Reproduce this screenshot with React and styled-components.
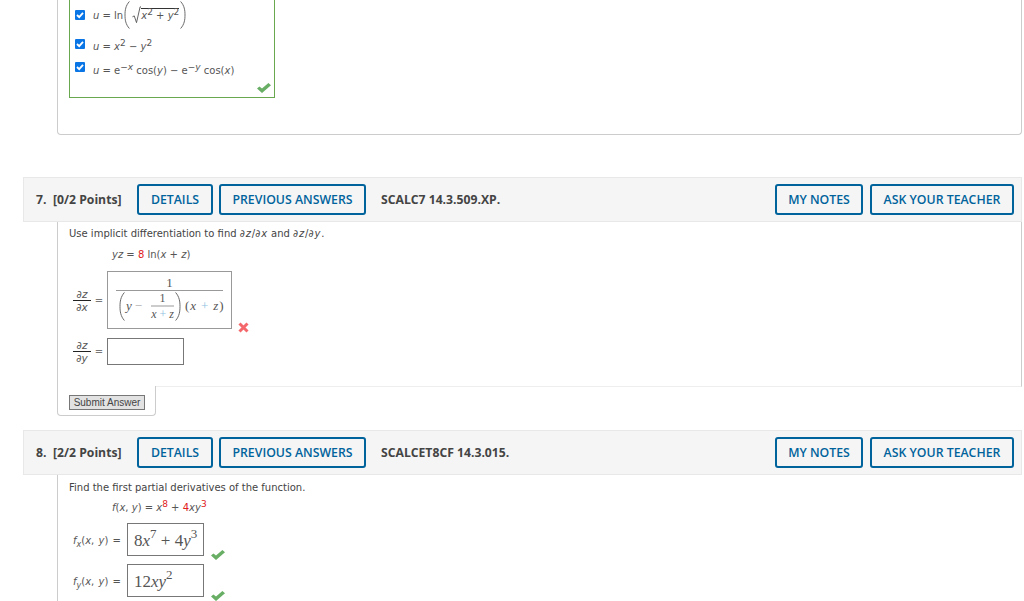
import React from 'react'
import styled, { createGlobalStyle } from 'styled-components'

const GlobalStyle = createGlobalStyle`
  html, body {
    margin: 0;
    height: 100%;
    overflow: hidden;
    background: #fff;
  }
`

const sans = `"DejaVu Sans", Verdana, sans-serif`
const uiSans = `"Liberation Sans", Arial, sans-serif`
const serif = `"Liberation Serif", "Times New Roman", serif`
const heading = `"Open Sans", "Noto Sans", sans-serif`

function Paren({ flip, height = 30 }) {
  return (
    <ParenSvg viewBox="0 0 6 30" width="6" height={height} $flip={flip} preserveAspectRatio="none">
      <path d="M5.4 0.5 C1.6 5 1 10 1 15 C1 20 1.6 25 5.4 29.5" fill="none" stroke="#666" strokeWidth="1" />
    </ParenSvg>
  )
}

function CheckMark() {
  return (
    <svg viewBox="0 0 14 10" width="14" height="10">
      <path d="M0 5.6 L2.4 3.4 L5 5.6 L11.4 0 L14 2.2 L5 10 Z" fill="#68ae64" />
    </svg>
  )
}

function CrossIcon() {
  return (
    <svg viewBox="0 0 11 11" width="11" height="11">
      <path d="M1.5 1.5 L9.5 9.5 M9.5 1.5 L1.5 9.5" fill="none" stroke="#f4686c" strokeWidth="3" />
    </svg>
  )
}

function Tick() {
  return (
    <TickBox>
      <svg viewBox="0 0 10 10" width="10" height="10">
        <path d="M2 5 L4.2 7.2 L8 2.8" fill="none" stroke="#fff" strokeWidth="1.8" />
      </svg>
    </TickBox>
  )
}

function QuestionHeader({ number, points, code }) {
  return (
    <Header>
      <Number>{number}.</Number>
      <Points>[{points} Points]</Points>
      <HeaderButton $width={76}>DETAILS</HeaderButton>
      <HeaderButton $width={147}>PREVIOUS ANSWERS</HeaderButton>
      <BookCode>{code}</BookCode>
      <HeaderRight>
        <HeaderButton $width={88}>MY NOTES</HeaderButton>
        <HeaderButton $width={144}>ASK YOUR TEACHER</HeaderButton>
      </HeaderRight>
    </Header>
  )
}

function Partial({ of }) {
  return (
    <Fraction>
      <Numer><i>∂z</i></Numer>
      <Denom><i>∂{of}</i></Denom>
    </Fraction>
  )
}

export default function App() {
  return (
    <Page>
      <GlobalStyle />
      <PrevCard>
        <GreenBox>
          <CheckRow $height={28}>
            <Tick />
            <RootLine>
              <i>u</i> = ln
              <Paren height={28} />
              <Radical viewBox="0 0 10 20" width="9" height="20">
                <path d="M0.5 12 L2.5 11 L5 18.5 L9 1 L10 1" fill="none" stroke="#555" strokeWidth="1" />
              </Radical>
              <Radicand><i>x</i><sup>2</sup> + <i>y</i><sup>2</sup></Radicand>
              <Paren flip height={28} />
            </RootLine>
          </CheckRow>
          <CheckRow $height={23} $top={1}>
            <Tick />
            <MathLine $shift={3}><i>u</i> = <i>x</i><sup>2</sup> − <i>y</i><sup>2</sup></MathLine>
          </CheckRow>
          <CheckRow $height={24} $top={1}>
            <Tick />
            <MathLine $shift={4}>
              <i>u</i> = e<sup>−<i>x</i></sup> cos(<i>y</i>) − e<sup>−<i>y</i></sup> cos(<i>x</i>)
            </MathLine>
          </CheckRow>
          <BoxMark><CheckMark /></BoxMark>
        </GreenBox>
      </PrevCard>

      <QuestionHeader number={7} points="0/2" code="SCALC7 14.3.509.XP." />
      <BodyMain>
        <Prompt>Use implicit differentiation to find <i>∂z</i>/<i>∂x</i> and <i>∂z</i>/<i>∂y</i>.</Prompt>
        <Formula $indent={43} $top={7}>
          <i>yz</i> = <Red>8</Red> ln(<i>x</i> + <i>z</i>)
        </Formula>
        <AnswerRow $top={9}>
          <Partial of="x" />
          <Equals>=</Equals>
          <AnswerBox $width={125} $height={58} $light>
            <SerifFraction>
              <span>1</span>
              <SerifDenom>
                <Paren height={29} />
                <i>y</i><Faint>−</Faint>
                <InnerFraction>
                  <span>1</span>
                  <span><i>x</i> <Plus>+</Plus> <i>z</i></span>
                </InnerFraction>
                <Paren flip height={29} />
                <Spaced>(<i>x</i> <Plus>+</Plus> <i>z</i>)</Spaced>
              </SerifDenom>
            </SerifFraction>
          </AnswerBox>
          <CrossMark><CrossIcon /></CrossMark>
        </AnswerRow>
        <AnswerRow $top={9}>
          <Partial of="y" />
          <Equals>=</Equals>
          <AnswerBox $width={77} $height={27} />
        </AnswerRow>
      </BodyMain>
      <SubmitTab>
        <SubmitButton>Submit Answer</SubmitButton>
      </SubmitTab>

      <QuestionHeader number={8} points="2/2" code="SCALCET8CF 14.3.015." />
      <LastBody>
        <Prompt $top={6}>Find the first partial derivatives of the function.</Prompt>
        <Formula $indent={43} $top={6}>
          <i>f</i>(<i>x</i>, <i>y</i>) = <i>x</i><sup><Red>8</Red></sup> + <Red>4</Red><i>xy</i><sup><Red>3</Red></sup>
        </Formula>
        <DerivRow $top={8}>
          <DerivLabel><i>f<sub>x</sub></i>(<i>x</i>, <i>y</i>) =</DerivLabel>
          <AnswerBox $width={77} $height={33}>
            <TypedAnswer>8<i>x</i><sup>7</sup> + 4<i>y</i><sup>3</sup></TypedAnswer>
          </AnswerBox>
          <RowMark><CheckMark /></RowMark>
        </DerivRow>
        <DerivRow $top={8}>
          <DerivLabel><i>f<sub>y</sub></i>(<i>x</i>, <i>y</i>) =</DerivLabel>
          <AnswerBox $width={77} $height={33}>
            <TypedAnswer>12<i>xy</i><sup>2</sup></TypedAnswer>
          </AnswerBox>
          <RowMark><CheckMark /></RowMark>
        </DerivRow>
      </LastBody>
    </Page>
  )
}

const Page = styled.div`
  width: 1024px;
  height: 601px;
  overflow: hidden;
  padding: 0 2px 0 23px;
  box-sizing: border-box;
  display: flex;
  flex-direction: column;
  color: #444;
  font-family: ${sans};
`
const PrevCard = styled.div`
  flex: none;
  height: 135px;
  margin: 0 0 42px 34px;
  padding-left: 11px;
  box-sizing: border-box;
  border: 1px solid #ccc;
  border-top: none;
  border-radius: 0 0 4px 4px;
`
const GreenBox = styled.div`
  position: relative;
  width: 206px;
  height: 98px;
  padding: 3px 0 0 5px;
  box-sizing: border-box;
  border: 1px solid #6aa84f;
  border-top: none;
`
const CheckRow = styled.div`
  display: flex;
  height: ${p => p.$height}px;
  align-items: flex-start;
  padding-top: ${p => p.$top || 0}px;
  box-sizing: border-box;
  gap: 8px;
`
const TickBox = styled.span`
  flex: none;
  width: 10px;
  height: 10px;
  margin-top: 7px;
  background: #0a76e6;
  border-radius: 1px;
  display: block;
  svg { display: block; }
`
const MathLine = styled.span`
  display: block;
  white-space: pre-wrap;
  line-height: 24px;
  height: 24px;
  margin-top: ${p => p.$shift || 0}px;
  font-size: 10px;
  color: #555;
  sup { font-size: 9px; line-height: 0; vertical-align: 4px; }
`
const RootLine = styled(MathLine)`
  display: flex;
  align-items: center;
  line-height: normal;
`
const ParenSvg = styled.svg`
  flex: none;
  margin: 0 1px;
  transform: ${p => (p.$flip ? 'scaleX(-1)' : 'none')};
`
const Radical = styled.svg`
  flex: none;
  margin-left: 1px;
`
const Radicand = styled.span`
  border-top: 1px solid #333;
  margin-top: -2px;
  padding: 1px 0 0;
  white-space: pre;
`
const BoxMark = styled.span`
  position: absolute;
  right: 3px;
  bottom: 4px;
  line-height: 0;
`
const Header = styled.div`
  display: flex;
  align-items: center;
  flex: none;
  height: 45px;
  box-sizing: border-box;
  padding: 0 7px 0 12px;
  background: #f5f5f5;
  border: 1px solid #e8e8e8;
  font-family: ${heading};
  font-size: 12.2px;
  color: #444;
`
const Number = styled.span`
  font-weight: 700;
  width: 17px;
`
const Points = styled.span`
  font-weight: 700;
  width: 84px;
`
const HeaderButton = styled.span`
  display: flex;
  align-items: center;
  justify-content: center;
  width: ${p => p.$width}px;
  height: 31px;
  box-sizing: border-box;
  margin-right: 6px;
  border: 2px solid #00639c;
  border-radius: 3px;
  color: #00639c;
  font-weight: 600;
  font-size: 12.3px;
  white-space: nowrap;
  &:last-child { margin: 0 0 0 1px; }
`
const BookCode = styled.span`
  font-weight: 700;
  margin-left: 9px;
`
const HeaderRight = styled.div`
  display: flex;
  margin-left: auto;
`
const BodyMain = styled.div`
  flex: none;
  margin-left: 34px;
  height: 165px;
  box-sizing: border-box;
  padding: 5px 0 0 11px;
  border-left: 1px solid #ccc;
  border-right: 1px solid #ccc;
  border-bottom: 1px solid #eee;
`
const Prompt = styled.div`
  font-size: 10px;
  line-height: 14px;
  margin-top: ${p => p.$top || 0}px;
  color: #444;
  i { letter-spacing: 0.8px; }
`
const Formula = styled.div`
  font-size: 10px;
  line-height: 14px;
  margin: ${p => p.$top || 0}px 0 0 ${p => p.$indent}px;
  color: #555;
  sup { font-size: 9px; line-height: 0; vertical-align: 4px; }
`
const Red = styled.span`
  color: #e02020;
`
const AnswerRow = styled.div`
  display: flex;
  align-items: center;
  margin-top: ${p => p.$top}px;
  margin-left: 4px;
  position: relative;
`
const Fraction = styled.span`
  display: flex;
  flex-direction: column;
  align-items: center;
  width: 18px;
  font-size: 10.5px;
  line-height: 12px;
  color: #555;
`
const Numer = styled.span`
  border-bottom: 1px solid #222;
  width: 100%;
  text-align: center;
`
const Denom = styled.span`
  width: 100%;
  text-align: center;
`
const Equals = styled.span`
  font-size: 10px;
  color: #777;
  width: 16px;
  text-align: center;
`
const AnswerBox = styled.div`
  flex: none;
  width: ${p => p.$width}px;
  height: ${p => p.$height}px;
  box-sizing: border-box;
  border: 1px solid ${p => (p.$light ? '#999' : '#777')};
  display: flex;
  align-items: center;
  justify-content: center;
  background: #fff;
`
const SerifFraction = styled.div`
  display: flex;
  flex-direction: column;
  font-family: ${serif};
  font-size: 13px;
  color: #555;
  width: 107px;
  margin-bottom: 4px;
  & > span { line-height: 15px; border-bottom: 1px solid #999; text-align: center; }
`
const SerifDenom = styled.div`
  display: flex;
  align-items: center;
  white-space: pre;
  padding-left: 2px;
`
const Faint = styled.span`
  color: #aaa;
  margin: 0 9px 0 3px;
`
const Plus = styled.span`
  color: #8fbfe0;
`
const Spaced = styled.span`
  letter-spacing: 0.9px;
  margin-left: 3px;
`
const InnerFraction = styled.span`
  display: flex;
  flex-direction: column;
  align-items: center;
  font-size: 12px;
  line-height: 14px;
  width: 24px;
  white-space: pre;
  span:first-child { border-bottom: 2px solid #ccc; width: 100%; text-align: center; }
`
const CrossMark = styled.span`
  align-self: flex-end;
  margin-left: 6px;
  margin-bottom: -4px;
  line-height: 0;
`
const SubmitTab = styled.div`
  flex: none;
  width: 99px;
  height: 30px;
  margin: -1px 0 14px 34px;
  box-sizing: border-box;
  padding: 9px 0 0 11px;
  background: #fff;
  border: 1px solid #ccc;
  border-top: none;
  border-radius: 0 0 4px 4px;
`
const SubmitButton = styled.div`
  width: 76px;
  height: 15px;
  box-sizing: border-box;
  background: #e2e2e2;
  border: 1px solid #777;
  font-family: ${uiSans};
  font-size: 10px;
  line-height: 13px;
  text-align: center;
  color: #444;
  white-space: nowrap;
`
const LastBody = styled.div`
  flex: 1;
  margin-left: 34px;
  padding: 0 0 0 11px;
  border-left: 1px solid #ccc;
`
const DerivRow = styled.div`
  display: flex;
  align-items: center;
  margin-top: ${p => p.$top}px;
  margin-left: 4px;
  position: relative;
`
const DerivLabel = styled.span`
  width: 54px;
  margin-top: 2px;
  font-size: 10px;
  word-spacing: 1px;
  color: #555;
  white-space: pre;
  sub { font-size: 8px; line-height: 0; }
`
const TypedAnswer = styled.span`
  font-family: ${serif};
  font-size: 17px;
  color: #555;
  white-space: pre;
  width: 100%;
  padding: 3px 0 0 6px;
  sup { font-size: 13px; line-height: 0; vertical-align: 8px; }
`
const RowMark = styled.span`
  align-self: flex-end;
  margin-left: 7px;
  margin-bottom: -4px;
  line-height: 0;
`
